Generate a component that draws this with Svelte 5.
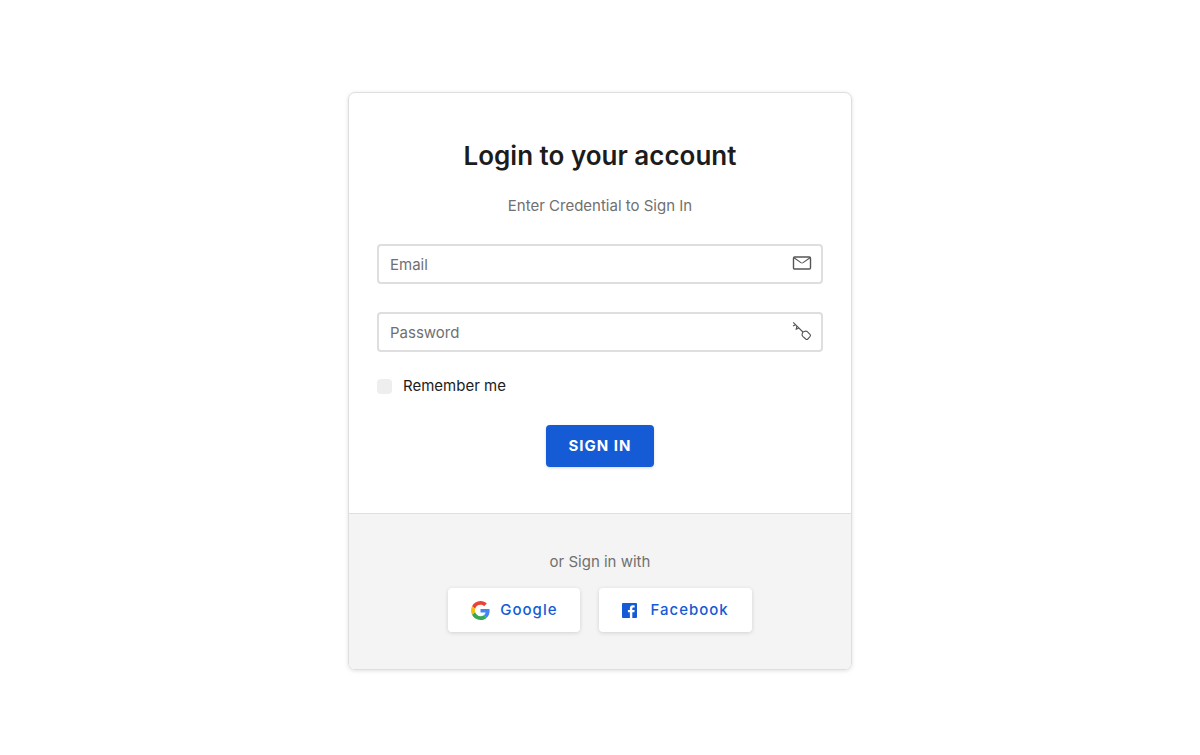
<script lang="ts">
  let email = $state('');
  let password = $state('');
  let remember = $state(false);

  function handleSubmit(e: SubmitEvent) {
    e.preventDefault();
  }
</script>

<main>
  <section class="card">
    <form onsubmit={handleSubmit}>
      <h1>Login to your account</h1>
      <p class="subtitle">Enter Credential to Sign In</p>

      <div class="field">
        <input type="email" aria-label="Email" placeholder="Email" bind:value={email} />
        <svg viewBox="0 0 20 20" width="20" height="20" aria-hidden="true">
          <rect x="1.5" y="4" width="17" height="12" rx="1.2" />
          <path class="flap" d="M2 4.8 L8.9 9.6 Q10 10.3 11.1 9.6 L18 4.8" />
        </svg>
      </div>

      <div class="field">
        <input type="password" aria-label="Password" placeholder="Password" bind:value={password} />
        <svg class="key" viewBox="0 0 20 20" width="20" height="20" aria-hidden="true">
          <path d="M1.2 1.4 L10.9 11 M1 5 L3.6 3.8 M3.6 8.4 L7 7 M4.8 5 L4.2 8" />
          <path d="M10.9 11 L13.2 10.2 Q14.4 9.8 15.3 10.7 L18 13.4 Q18.9 14.3 18.1 15.3 L15.8 18 Q14.8 18.9 13.7 18 L10.8 15.4 Q9.8 14.4 10.1 13.2 Z" />
        </svg>
      </div>

      <label class="remember">
        <input type="checkbox" bind:checked={remember} />
        Remember me
      </label>

      <button class="submit" type="submit">SIGN IN</button>
    </form>

    <footer>
      <p>or Sign in with</p>
      <div class="providers">
        <button class="google" type="button">
          <svg viewBox="0 0 48 48" width="19" height="19" aria-hidden="true">
            <path fill="#ea4335" d="M24 9.5c3.54 0 6.71 1.22 9.21 3.6l6.85-6.85C35.9 2.38 30.47 0 24 0 14.62 0 6.51 5.38 2.56 13.22l7.98 6.19C12.43 13.72 17.74 9.5 24 9.5z" />
            <path fill="#4285f4" d="M46.98 24.55c0-1.57-.15-3.09-.38-4.55H24v9.02h12.94c-.58 2.96-2.26 5.48-4.78 7.18l7.73 6c4.51-4.18 7.09-10.36 7.09-17.65z" />
            <path fill="#fbbc05" d="M10.53 28.59c-.48-1.45-.76-2.99-.76-4.59s.27-3.14.76-4.59l-7.98-6.19C.92 16.46 0 20.12 0 24c0 3.88.92 7.54 2.56 10.78l7.97-6.19z" />
            <path fill="#34a853" d="M24 48c6.48 0 11.93-2.13 15.89-5.81l-7.73-6c-2.15 1.45-4.92 2.3-8.16 2.3-6.26 0-11.57-4.22-13.47-9.91l-7.98 6.19C6.51 42.62 14.62 48 24 48z" />
          </svg>
          Google
        </button>
        <button class="facebook" type="button">
          <svg viewBox="0 0 16 16" width="15" height="15" aria-hidden="true">
            <path fill="currentColor" d="M1 0h14a1 1 0 0 1 1 1v14a1 1 0 0 1-1 1h-4V9.9h2.1l.4-2.4H11V6c0-.8.4-1.2 1.2-1.2h1.3V2.7c-.5-.1-1.1-.2-1.9-.2-2 0-3.2 1.1-3.2 3.2v1.8H6.3v2.4h2.1V16H1a1 1 0 0 1-1-1V1a1 1 0 0 1 1-1z" />
          </svg>
          Facebook
        </button>
      </div>
    </footer>
  </section>
</main>

<style>
  :global(body) {
    background: #fff;
    font-family: Inter, 'Liberation Sans', sans-serif;
    font-size: 15px;
    line-height: 20px;
    color: #1c1c1c;
  }

  main {
    padding: 92px 16px 84px;
  }

  .card {
    max-width: 502px;
    margin: 0 auto;
    border: 1px solid #dedede;
    border-radius: 7px;
    overflow: hidden;
    box-shadow: 0 1px 4px rgba(0, 0, 0, 0.12);
  }

  form {
    display: flex;
    flex-direction: column;
    padding: 46px 28px;
  }

  h1 {
    margin: 0;
    font-size: 26px;
    font-weight: 600;
    line-height: 34px;
    text-align: center;
  }

  .subtitle {
    margin: 23px 0 28px;
    text-align: center;
    color: #707070;
  }

  .field {
    position: relative;
    margin-bottom: 28px;
  }

  .field input {
    display: block;
    box-sizing: border-box;
    width: 100%;
    height: 40px;
    padding: 0 44px 0 11px;
    border: 2px solid #dedede;
    border-radius: 4px;
    background: #fff;
    font: inherit;
    color: inherit;
  }

  .field input::placeholder {
    color: #707070;
    opacity: 1;
  }

  .field input:focus {
    outline: none;
    border-color: #155bd5;
  }

  .field svg {
    position: absolute;
    top: 9px;
    right: 11px;
    fill: none;
    stroke: #555;
    stroke-width: 1.4;
    pointer-events: none;
  }

  .field .flap,
  .field .key {
    stroke-width: 1.1;
  }

  .remember {
    display: flex;
    align-items: center;
    align-self: flex-start;
    gap: 11px;
    margin-top: -4px;
  }

  .remember input {
    appearance: none;
    width: 15px;
    height: 15px;
    margin: 0;
    border-radius: 4px;
    background: #eee;
  }

  .remember input:checked {
    background: #155bd5;
  }

  button {
    border: 0;
    border-radius: 4px;
    font: inherit;
    font-weight: 500;
    letter-spacing: 1px;
    cursor: pointer;
  }

  .submit {
    align-self: center;
    margin-top: 29px;
    padding: 11px 23px;
    background: #155bd5;
    font-weight: 700;
    color: #fff;
    box-shadow: 0 1px 3px rgba(0, 0, 0, 0.16);
  }

  footer {
    padding: 38px 28px 37px;
    border-top: 1px solid #dedede;
    background: #f4f4f4;
    text-align: center;
  }

  footer p {
    margin: 0 0 16px;
    color: #707070;
  }

  .providers {
    display: flex;
    flex-wrap: wrap;
    align-items: center;
    justify-content: center;
    gap: 19px;
  }

  .providers button {
    display: flex;
    align-items: center;
    padding: 12px 23px;
    background: #fff;
    color: #155bd5;
    box-shadow: 0 1px 4px rgba(0, 0, 0, 0.14);
  }

  .google {
    gap: 10px;
  }

  .facebook {
    gap: 13px;
  }
</style>
